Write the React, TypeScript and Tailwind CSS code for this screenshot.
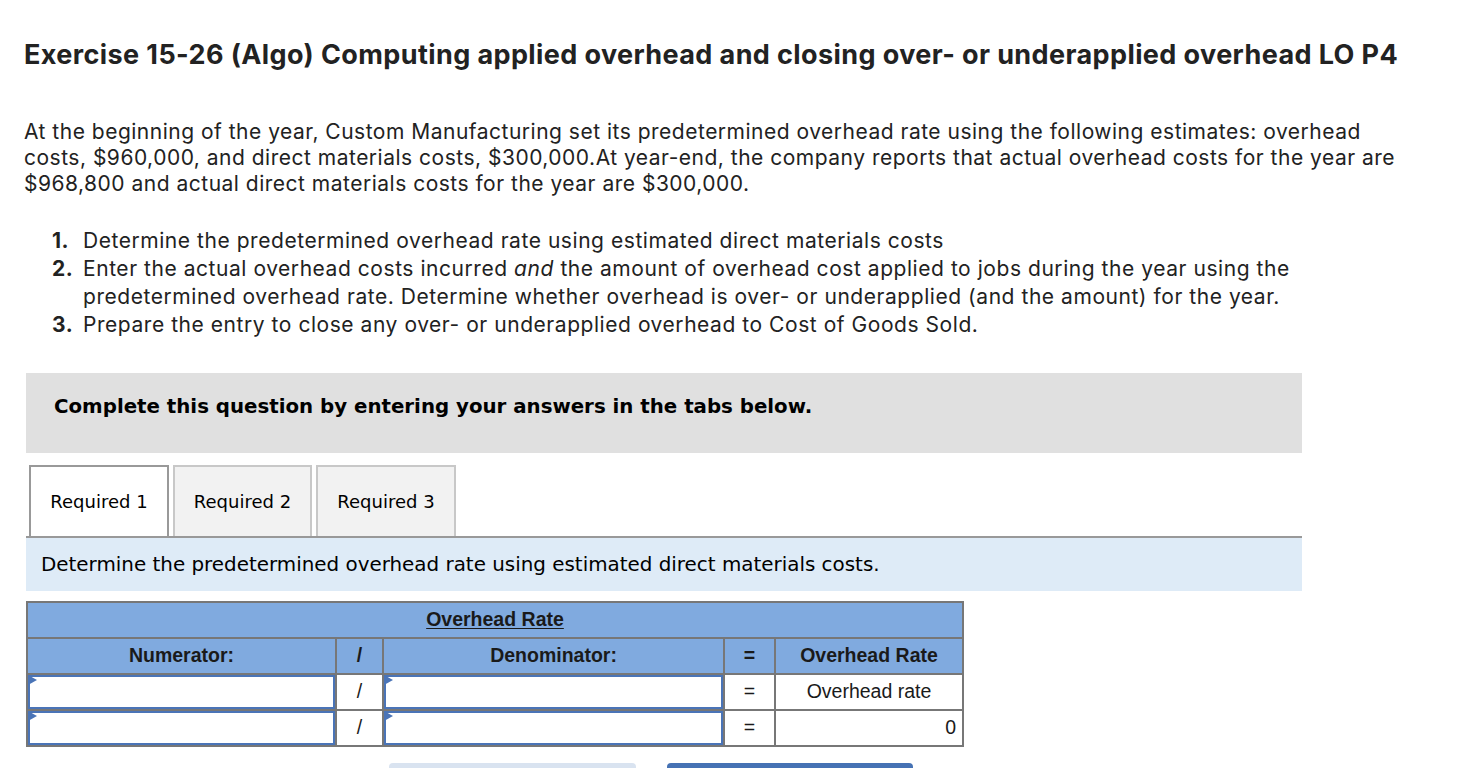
import React from "react";

const body = { fontFamily: "Inter, 'Noto Sans', sans-serif" };
const verdana = { fontFamily: "'DejaVu Sans', Verdana, sans-serif" };
const arial = { fontFamily: "'Liberation Sans', Arial, sans-serif" };

function Marker() {
  return (
    <span className="absolute left-0 top-0 w-0 h-0 border-t-[5px] border-b-[5px] border-l-[9px] border-t-transparent border-b-transparent border-l-[#4a74b7]" />
  );
}

function InputCell({ w }: { w: string }) {
  return (
    <td className={`relative border-2 border-[#777] p-0 h-[36px] bg-white ${w}`}>
      <div className="h-[34px] border-[2px] border-[#4a74b7] bg-white" />
      <Marker />
    </td>
  );
}

export default function App() {
  return (
    <div className="w-[1482px] h-[768px] overflow-hidden bg-white text-[#1a1a1a]">
      <div className="pl-[24px] pt-[38px]">
        <h1 style={body} className="text-[27px] leading-[34px] tracking-[0.4px] font-bold text-[#222] whitespace-nowrap">
          Exercise 15-26 (Algo) Computing applied overhead and closing over- or underapplied overhead LO P4
        </h1>
        <p style={body} className="mt-[47px] text-[21px] leading-[26px] tracking-[0.5px] text-[#222] w-[1440px]">
          At the beginning of the year, Custom Manufacturing set its predetermined overhead rate using the following estimates: overhead
          <br />
          costs, $960,000, and direct materials costs, $300,000.At year-end, the company reports that actual overhead costs for the year are
          <br />
          $968,800 and actual direct materials costs for the year are $300,000.
        </p>
        <ol style={body} className="mt-[30px] text-[21px] leading-[28px] tracking-[0.55px] text-[#222]">
          <li className="flex">
            <span className="w-[59px] pl-[28px] font-bold shrink-0">1.</span>
            <span>Determine the predetermined overhead rate using estimated direct materials costs</span>
          </li>
          <li className="flex">
            <span className="w-[59px] pl-[28px] font-bold shrink-0">2.</span>
            <span>
              Enter the actual overhead costs incurred <i>and</i> the amount of overhead cost applied to jobs during the year using the
              <br />
              predetermined overhead rate. Determine whether overhead is over- or underapplied (and the amount) for the year.
            </span>
          </li>
          <li className="flex">
            <span className="w-[59px] pl-[28px] font-bold shrink-0">3.</span>
            <span>Prepare the entry to close any over- or underapplied overhead to Cost of Goods Sold.</span>
          </li>
        </ol>
      </div>

      <div className="ml-[26px] w-[1276px]">
        <div className="mt-[34px] h-[80px] bg-[#e0e0e0] pl-[28px] pt-[22px]">
          <p style={verdana} className="text-[19.8px] leading-[24px] font-bold text-black">
            Complete this question by entering your answers in the tabs below.
          </p>
        </div>

        <div className="mt-[12px] flex gap-[4px] pl-[3px] border-b-2 border-[#999]">
          <div style={verdana} className="w-[140px] h-[71px] flex items-center justify-center bg-white border-2 border-b-0 border-[#999] text-[18px] text-black">
            Required 1
          </div>
          <div style={verdana} className="w-[139px] h-[71px] flex items-center justify-center bg-[#f2f2f2] border-2 border-b-0 border-[#c8c8c8] text-[18px] text-black">
            Required 2
          </div>
          <div style={verdana} className="w-[140px] h-[71px] flex items-center justify-center bg-[#f2f2f2] border-2 border-b-0 border-[#c8c8c8] text-[18px] text-black">
            Required 3
          </div>
        </div>

        <div className="h-[53px] bg-[#deebf7] pl-[15px] flex items-center">
          <p style={verdana} className="text-[19.9px] text-black">
            Determine the predetermined overhead rate using estimated direct materials costs.
          </p>
        </div>

        <table style={arial} className="mt-[10px] w-[938px] border-collapse border-2 border-[#777] text-[19.5px] text-[#1a1a1a]">
          <tbody>
            <tr className="bg-[#80aadf]">
              <td colSpan={5} className="h-[36px] border-2 border-[#777] text-center font-bold">
                <span className="underline underline-offset-2">Overhead Rate</span>
              </td>
            </tr>
            <tr className="bg-[#80aadf] font-bold">
              <td className="h-[36px] w-[309px] border-2 border-[#777] text-center">Numerator:</td>
              <td className="w-[47px] border-2 border-[#777] text-center">/</td>
              <td className="w-[341px] border-2 border-[#777] text-center">Denominator:</td>
              <td className="w-[51px] border-2 border-[#777] text-center">=</td>
              <td className="border-2 border-[#777] text-center">Overhead Rate</td>
            </tr>
            <tr>
              <InputCell w="w-[309px]" />
              <td className="border-2 border-[#777] text-center bg-white">/</td>
              <InputCell w="w-[341px]" />
              <td className="border-2 border-[#777] text-center bg-white">=</td>
              <td className="border-2 border-[#777] text-center bg-white">Overhead rate</td>
            </tr>
            <tr>
              <InputCell w="w-[309px]" />
              <td className="border-2 border-[#777] text-center bg-white">/</td>
              <InputCell w="w-[341px]" />
              <td className="border-2 border-[#777] text-center bg-white">=</td>
              <td className="border-2 border-[#777] text-right pr-[6px] bg-white">0</td>
            </tr>
          </tbody>
        </table>

        <div className="mt-[16px] flex">
          <div className="ml-[363px] w-[247px] h-[20px] rounded-[4px] bg-[#d9e3f0]" />
          <div className="ml-[31px] w-[246px] h-[20px] rounded-[4px] bg-[#4672b4]" />
        </div>
      </div>
    </div>
  );
}
